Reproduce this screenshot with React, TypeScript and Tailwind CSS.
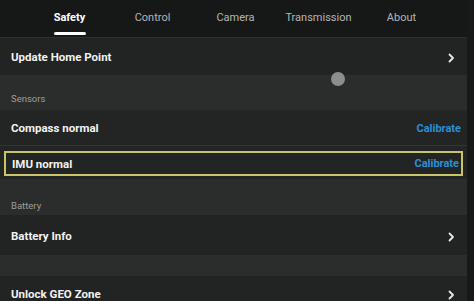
import React from "react";

const font = { fontFamily: "Roboto, 'Liberation Sans', sans-serif" };

function Chevron() {
  return (
    <svg width="7" height="10" viewBox="0 0 7 10" className="mr-[12px]">
      <path d="M1.5 1.5 L5 5 L1.5 8.5" fill="none" stroke="#e6e7e6" strokeWidth="1.8" strokeLinecap="round" strokeLinejoin="round" />
    </svg>
  );
}

export default function App() {
  const tabs = ["Safety", "Control", "Camera", "Transmission", "About"];
  return (
    <div className="relative w-[474px] h-[301px] overflow-hidden bg-[#161917] flex items-start" style={font}>
      <div className="w-[467px] flex flex-col shrink-0">
        <div className="h-[38px] shrink-0 bg-[#151817] flex pl-[28px] border-b border-[#2d302e]">
          {tabs.map((t, i) => (
            <div key={t} className="w-[83px] relative flex justify-center items-center pb-[1px]">
              <span className={i === 0 ? "text-[11px] font-bold text-white" : "text-[11px] text-[#b4b6b4]"}>{t}</span>
              {i === 0 && <div className="absolute bottom-[2px] w-[32px] h-[3px] rounded-full bg-white" />}
            </div>
          ))}
        </div>
        <div className="h-[37px] shrink-0 bg-[#212422] flex items-center justify-between pl-[11px] pt-[3px]">
          <span className="text-[11.5px] font-bold text-[#f2f2f2]">Update Home Point</span>
          <Chevron />
        </div>
        <div className="h-[35px] shrink-0 bg-[#2a2d2c] flex items-end pb-[4px] pl-[11px]">
          <span className="text-[9.5px] text-[#9c9e9c]">Sensors</span>
        </div>
        <div className="h-[36px] shrink-0 bg-[#222523] flex items-center justify-between pl-[11px] pt-[3px] border-b border-[#323533]">
          <span className="text-[11.5px] font-bold text-[#f2f2f2]">Compass normal</span>
          <span className="text-[11px] font-bold text-[#2b8fd6] mr-[6px]">Calibrate</span>
        </div>
        <div className="h-[33px] shrink-0 bg-[#222523] pt-[5px] px-[4px]">
          <div className="h-[25px] border-2 border-[#c9c46a] flex items-center justify-between pl-[6px] pt-[2px]">
            <span className="text-[11.5px] font-bold text-[#f2f2f2]">IMU normal</span>
            <span className="text-[11px] font-bold text-[#2b8fd6] mr-[2px]">Calibrate</span>
          </div>
        </div>
        <div className="h-[36px] shrink-0 bg-[#2a2d2c] flex items-end pb-[2px] pl-[11px]">
          <span className="text-[9.5px] text-[#9c9e9c]">Battery</span>
        </div>
        <div className="h-[40px] shrink-0 bg-[#212422] flex items-center justify-between pl-[11px] pt-[3px]">
          <span className="text-[11.5px] font-bold text-[#f2f2f2]">Battery Info</span>
          <Chevron />
        </div>
        <div className="h-[21px] shrink-0 bg-[#2a2d2c]" />
        <div className="h-[37px] shrink-0 bg-[#212422] flex items-center justify-between pl-[11px]">
          <span className="text-[11.5px] font-bold text-[#f2f2f2]">Unlock GEO Zone</span>
          <Chevron />
        </div>
      </div>
      <div className="flex-1 self-stretch bg-[#161917]" />
      <div className="absolute left-[331px] top-[72px] w-[14px] h-[14px] rounded-full bg-[#8b8e8c] blur-[0.6px]" />
    </div>
  );
}
